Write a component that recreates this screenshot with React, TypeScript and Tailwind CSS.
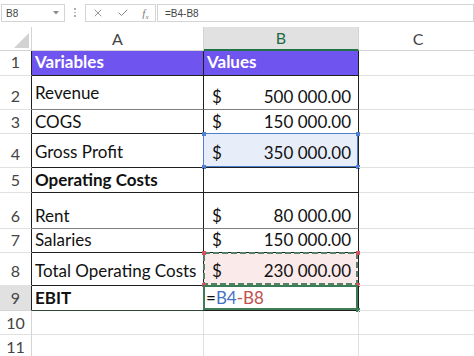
import { Check, X } from "lucide-react";
import type { ReactNode } from "react";

const DARK = "border-[#1f1f1f]";

function Money({ v }: { v: string }) {
  return (
    <>
      <span>$</span>
      <span className="ml-auto">{v}</span>
    </>
  );
}

function Toolbar() {
  return (
    <div className="flex h-[27px] items-start gap-0 bg-white pt-[4px]">
      <div className="ml-[1px] flex h-[18px] w-[64px] items-center justify-between border border-[#d4d4d4] pl-[4px] pr-[5px] font-['Liberation_Sans',sans-serif] text-[10px] text-[#444]">
        <span>B8</span>
        <svg width="6" height="4" viewBox="0 0 6 4">
          <path d="M0 0h6L3 3.5z" fill="#8a8a8a" />
        </svg>
      </div>
      <div className="flex w-[20px] flex-col items-center justify-center gap-[2px] pt-[4px]">
        <span className="h-[1.5px] w-[1.5px] bg-[#b0b0b0]" />
        <span className="h-[1.5px] w-[1.5px] bg-[#b0b0b0]" />
        <span className="h-[1.5px] w-[1.5px] bg-[#b0b0b0]" />
      </div>
      <div className="flex h-[18px] w-[71px] items-center justify-around border border-[#d4d4d4] text-[#7a7a7a]">
        <X size={12} strokeWidth={1.6} />
        <Check size={12} strokeWidth={1.8} />
        <span className="font-['Liberation_Serif',serif] text-[11px] italic">
          f<sub className="text-[7px]">x</sub>
        </span>
      </div>
      <div className="ml-[1px] flex h-[18px] flex-1 items-center border border-[#d4d4d4] pl-[7px] font-['Liberation_Sans',sans-serif] text-[10px] text-[#444]">
        =B4-B8
      </div>
    </div>
  );
}

function Head({ cls, children }: { cls: string; children?: ReactNode }) {
  return (
    <div className={`box-border flex items-end justify-center border-r pb-[3px] text-[16px] leading-none ${cls}`}>
      {children}
    </div>
  );
}

function Num({ n, cls }: { n: string; cls: string }) {
  return (
    <div className={`box-border flex items-end justify-center border-b border-r text-[16px] leading-none text-[#444] ${cls}`}>
      {n}
    </div>
  );
}

function Cell({ cls, children }: { cls: string; children?: ReactNode }) {
  return (
    <div className={`relative box-border flex items-end overflow-visible whitespace-nowrap border-b border-r ${cls}`}>
      {children}
    </div>
  );
}

function Handles({ color }: { color: string }) {
  const h = `absolute h-[4px] w-[4px] ${color}`;
  return (
    <>
      <span className={`${h} -left-[2px] -top-[2px]`} />
      <span className={`${h} -right-[2px] -top-[2px]`} />
      <span className={`${h} -bottom-[2px] -left-[2px]`} />
      <span className={`${h} -bottom-[2px] -right-[2px]`} />
    </>
  );
}

export default function App() {
  return (
    <div className="h-[356px] w-[474px] overflow-hidden bg-white font-['Lato',sans-serif] text-[#111]">
      <Toolbar />
      <div className="grid w-[478px] grid-cols-[32px_172px_155px_119px] grid-rows-[24px_25px_34px_24px_34px_25px_36px_24px_33px_25px_24px_24px] text-[17px] leading-none">
        {/* headers */}
        <div className="relative box-border border-b border-r border-[#d4d4d4]">
          <svg className="absolute bottom-[2px] right-[2px]" width="15" height="15" viewBox="0 0 15 15">
            <path d="M15 0V15H0z" fill="#d2d2d2" />
          </svg>
        </div>
        <Head cls="border-b border-[#d4d4d4] text-[#444]">A</Head>
        <Head cls="border-b-2 border-r-[#d4d4d4] border-b-[#217346] bg-[#e1e1e1] text-[#1e6b43]">B</Head>
        <Head cls="border-b border-[#d4d4d4] text-[#444]">C</Head>

        {/* 1 */}
        <Num n="1" cls={`border-b-[#e1e1e1] pb-[5px] border-r-[#1f1f1f]`} />
        <Cell cls={`${DARK} bg-[#7054f0] pb-[5px] pl-[3px] font-bold text-white`}>Variables</Cell>
        <Cell cls={`${DARK} bg-[#7054f0] pb-[5px] pl-[3px] font-bold text-white`}>Values</Cell>
        <Cell cls="border-[#e1e1e1]" />

        {/* 2 */}
        <Num n="2" cls="border-b-[#e1e1e1] pb-[5px] border-r-[#1f1f1f]" />
        <Cell cls="border-b-[#7f7f7f] border-r-[#1f1f1f] pb-[8px] pl-[3px]">Revenue</Cell>
        <Cell cls="border-b-[#7f7f7f] border-r-[#1f1f1f] pb-[4px] pl-[8px] pr-[7px]">
          <Money v="500 000.00" />
        </Cell>
        <Cell cls="border-[#e1e1e1]" />

        {/* 3 */}
        <Num n="3" cls="border-b-[#e1e1e1] pb-[3px] border-r-[#1f1f1f]" />
        <Cell cls={`${DARK} pb-[3px] pl-[3px]`}>COGS</Cell>
        <Cell cls={`${DARK} pb-[3px] pl-[8px] pr-[7px]`}>
          <Money v="150 000.00" />
        </Cell>
        <Cell cls="border-[#e1e1e1]" />

        {/* 4 */}
        <Num n="4" cls="border-b-[#e1e1e1] pb-[5px] border-r-[#1f1f1f]" />
        <Cell cls={`${DARK} pb-[7px] pl-[3px]`}>Gross Profit</Cell>
        <Cell cls={`${DARK} bg-[#e8eef9] pb-[6px] pl-[8px] pr-[7px]`}>
          <Money v="350 000.00" />
          <span className="absolute -left-px -top-px h-[calc(100%+1px)] w-[calc(100%+1px)] border border-[#4f7fd0]" />
          <Handles color="bg-[#4f7fd0]" />
        </Cell>
        <Cell cls="border-[#e1e1e1]" />

        {/* 5 */}
        <Num n="5" cls="border-b-[#e1e1e1] pb-[4px] border-r-[#1f1f1f]" />
        <Cell cls={`${DARK} pb-[4px] pl-[3px] font-bold`}>Operating Costs</Cell>
        <Cell cls={DARK} />
        <Cell cls="border-[#e1e1e1]" />

        {/* 6 */}
        <Num n="6" cls="border-b-[#e1e1e1] pb-[4px] border-r-[#1f1f1f]" />
        <Cell cls="border-b-[#7f7f7f] border-r-[#1f1f1f] pb-[4px] pl-[3px]">Rent</Cell>
        <Cell cls="border-b-[#7f7f7f] border-r-[#1f1f1f] pb-[4px] pl-[8px] pr-[7px]">
          <Money v="80 000.00" />
        </Cell>
        <Cell cls="border-[#e1e1e1]" />

        {/* 7 */}
        <Num n="7" cls="border-b-[#e1e1e1] pb-[4px] border-r-[#1f1f1f]" />
        <Cell cls={`${DARK} pb-[4px] pl-[3px]`}>Salaries</Cell>
        <Cell cls={`${DARK} pb-[4px] pl-[8px] pr-[7px]`}>
          <Money v="150 000.00" />
        </Cell>
        <Cell cls="border-[#e1e1e1]" />

        {/* 8 */}
        <Num n="8" cls="border-b-[#e1e1e1] pb-[6px] border-r-[#1f1f1f]" />
        <Cell cls={`${DARK} pb-[6px] pl-[3px]`}>Total Operating Costs</Cell>
        <Cell cls={`${DARK} bg-[#fbeaea] pb-[6px] pl-[8px] pr-[7px]`}>
          <Money v="230 000.00" />
          <svg className="absolute -left-px -top-px h-[calc(100%+1px)] w-[calc(100%+1px)] overflow-visible">
            <rect x="1" y="1" width="calc(100% - 2px)" height="calc(100% - 2px)" fill="none" stroke="#55806a" strokeWidth="2" strokeDasharray="6 3" />
          </svg>
          <Handles color="bg-[#d0555a]" />
        </Cell>
        <Cell cls="border-[#e1e1e1]" />

        {/* 9 */}
        <Num n="9" cls="bg-[#e1e1e1] border-b-[#d4d4d4] pb-[4px] border-r-[#1f1f1f]" />
        <Cell cls="border-b-[#2c4a36] border-r-[#1f1f1f] pb-[4px] pl-[3px] font-bold">EBIT</Cell>
        <Cell cls="border-b-[#1f1f1f] border-r-[#1f1f1f] pb-[4px] pl-[2px]">
          <span>=</span>
          <span className="text-[#4472c4]">B4</span>
          <span className="text-[#c0504d]">-B8</span>
          <span className="absolute -left-px -top-px h-[calc(100%+1px)] w-[calc(100%+1px)] border-2 border-[#3c7d55]" />
          <span className="absolute -bottom-[2px] -right-[2px] h-[4px] w-[4px] bg-[#3c7d55]" />
        </Cell>
        <Cell cls="border-[#e1e1e1]" />

        {/* 10 */}
        <Num n="10" cls="border-b-[#e1e1e1] pb-[3px] border-r-[#d4d4d4]" />
        <Cell cls="border-[#e1e1e1]" />
        <Cell cls="border-[#e1e1e1]" />
        <Cell cls="border-[#e1e1e1]" />

        {/* 11 */}
        <Num n="11" cls="border-b-[#e1e1e1] pb-[3px] border-r-[#d4d4d4]" />
        <Cell cls="border-[#e1e1e1]" />
        <Cell cls="border-[#e1e1e1]" />
        <Cell cls="border-[#e1e1e1]" />
      </div>
    </div>
  );
}
